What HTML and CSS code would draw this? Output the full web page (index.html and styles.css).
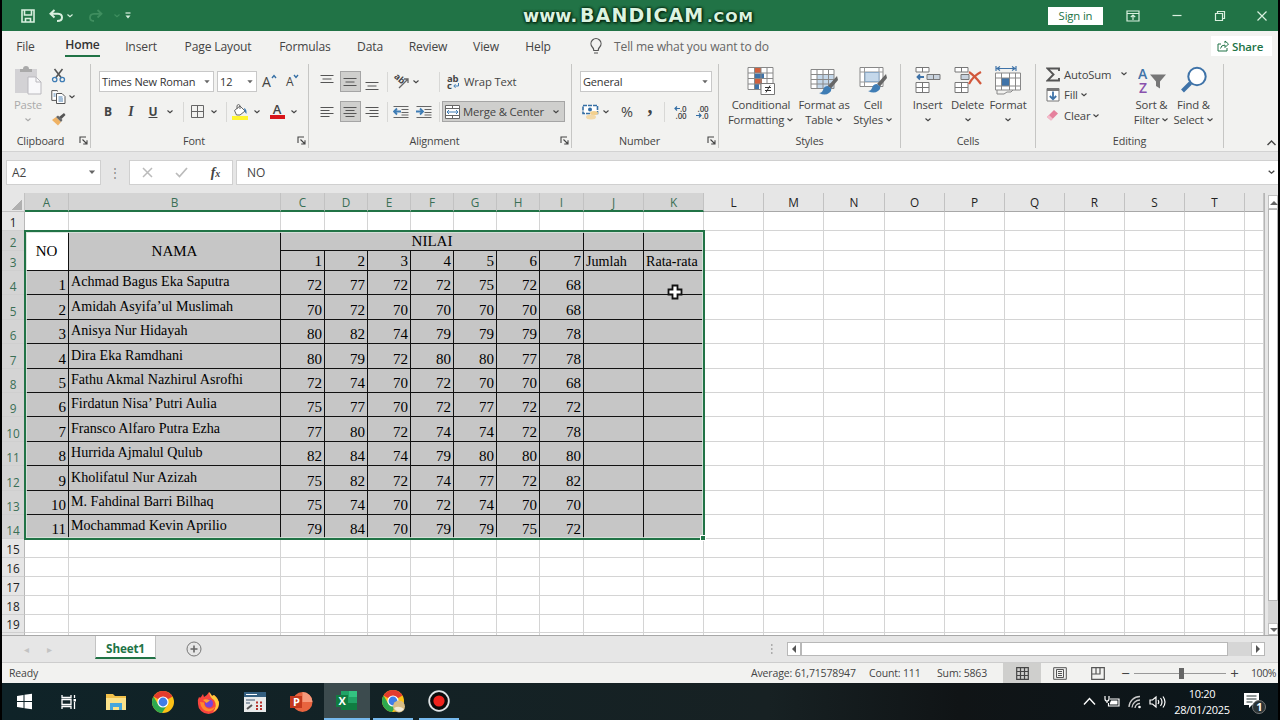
FILE: index.html
```html
<!DOCTYPE html>
<html lang="en">
  <head>
    <meta charset="UTF-8" />
    <meta name="viewport" content="width=device-width, initial-scale=1.0" />
    <title>Excel</title>
    <link rel="stylesheet" href="styles.css">
  </head>

  <body>
    <!-- shared shapes -->
    <svg class="defs">
      <symbol id="chev" viewBox="0 0 8 6"><path d="M1.500 1.500L4 3.600L6.500 1.500" fill="none" stroke="currentColor" stroke-width="1.200"/></symbol>
      <symbol id="tri" viewBox="0 0 8 6"><path d="M1.300 1.300h5.400L4 4.300z" fill="#666"/></symbol>
      <symbol id="launch" viewBox="0 0 9 9"><path d="M1 7V1h6M3.500 3.500L8 8M8 4.200V8H4.200" fill="none" stroke="#444" stroke-width="1.100"/></symbol>
      <symbol id="chrome" viewBox="0 0 24 24">
        <circle cx="12" cy="12" r="11" fill="#fbc116"/>
        <path d="M12 12L2.500 6.500A11 11 0 0 1 21.500 6.500z" fill="#e33b2e"/>
        <path d="M2.500 6.500A11 11 0 0 0 11 23L16.500 14.500L12 12L7.300 14.700z" fill="#2da94f"/>
        <circle cx="12" cy="12" r="5.600" fill="#fff"/><circle cx="12" cy="12" r="4.400" fill="#3f7de8"/>
      </symbol>
      <symbol id="brush" viewBox="0 0 20 20"><path d="M19 1L10 11l3 2.500L20 5z" fill="#666"/><path d="M10 11q-4 0-5 4q-1 3-4 3q6 3 10 0q3-2 2-4.500z" fill="#3f7db5"/></symbol>
    </svg>

    <div class="window">
      <div class="titlebar">
        <div class="quick">
          <svg width="14" height="14" viewBox="0 0 14 14"><path d="M1 1h12v12H1zM3.500 1v5h7V1M4.500 13V9.500h5v3.500" fill="none" stroke="#d9f0df" stroke-width="1.600"/></svg>
          <svg width="14" height="14" viewBox="0 0 14 14"><path d="M5.500 1L1.500 4.800L5.500 8.500M1.500 4.800H9q4 .2 4 3.700q0 3.500-5 3.500" fill="none" stroke="#d9f0df" stroke-width="2"/></svg>
          <svg class="light" width="8" height="6"><use href="#chev"/></svg>
          <svg width="14" height="14" viewBox="0 0 14 14"><path d="M8.500 1L12.500 4.800L8.500 8.500M12.500 4.800H5q-4 .2-4 3.700q0 3.500 4 3.500" fill="none" stroke="#3f8e5f" stroke-width="1.800"/></svg>
          <svg class="dim" width="8" height="6"><use href="#chev"/></svg>
          <svg width="8" height="8" viewBox="0 0 8 8"><path d="M1.500 1h5" stroke="#d9f0df" stroke-width="1.200"/><path d="M1.500 3.500h5L4 6.500z" fill="#d9f0df"/></svg>
        </div>
        <div class="brand"><span class="www">www.</span><span class="bandi">BANDICAM</span><span class="com">.COM</span></div>
        <div class="sign">Sign in</div>
        <div class="win-btns">
          <svg width="14" height="12" viewBox="0 0 14 12"><path d="M1 1h12v10H1zM1 3.500h12M7 10V5M4.800 7L7 5l2.200 2" fill="none" stroke="#d9f0df" stroke-width="1.200"/></svg>
          <svg width="12" height="12" viewBox="0 0 12 12"><path d="M1.500 5.500h9" stroke="#d9f0df" stroke-width="1.200"/></svg>
          <svg width="12" height="12" viewBox="0 0 12 12"><path d="M1.500 3.500h7v7h-7zM3.500 3.500v-2h7v7H8.500" fill="none" stroke="#d9f0df" stroke-width="1.200"/></svg>
          <svg width="12" height="12" viewBox="0 0 12 12"><path d="M1.500 1.500l9 9M10.500 1.500l-9 9" stroke="#d9f0df" stroke-width="1.200"/></svg>
        </div>
      </div>

      <div class="tabs">
        <div>File</div>
        <div class="active"><span>Home</span></div>
        <div>Insert</div>
        <div>Page Layout</div>
        <div>Formulas</div>
        <div>Data</div>
        <div>Review</div>
        <div>View</div>
        <div>Help</div>
        <svg class="bulb" width="14" height="18" viewBox="0 0 14 18"><path d="M4.800 12.500q0-2-1.500-3.500a5 5 0 1 1 7.400 0q-1.500 1.500-1.500 3.500zM5 15h4" fill="none" stroke="#555" stroke-width="1.200"/></svg>
        <div class="tell">Tell me what you want to do</div>
        <div class="share">
          <svg width="12" height="12" viewBox="0 0 12 12"><path d="M4 4H1v7h9V8M3.500 8.500Q4 5 8 5V7.500L11.500 4L8 1V3.200" fill="none" stroke="#217346" stroke-width="1"/></svg>
          Share
        </div>
      </div>

      <div class="ribbon">
        <div class="group clipboard">
          <div class="body">
            <div class="big paste">
              <svg width="28" height="30" viewBox="0 0 28 30"><path d="M1 3h22v24H1z" fill="#d3d2d5"/><path d="M6 6V3h3q0-3 3-3t3 3h3v3z" fill="#aaa"/><path d="M14 11h8l5 5v12H14z" fill="#f8f8fa" stroke="#b9b8bd"/><path d="M22 11v5h5" fill="none" stroke="#b9b8bd"/></svg>
              <span>Paste</span>
              <svg width="8" height="6"><use href="#chev"/></svg>
            </div>
            <div class="clip-col">
              <div><svg width="14" height="15" viewBox="0 0 14 15"><path d="M3 1l7 9M11 1L4 10" stroke="#555" stroke-width="1.600"/><circle cx="3.200" cy="11.500" r="2.200" fill="none" stroke="#3f7db5" stroke-width="1.300"/><circle cx="10.800" cy="11.500" r="2.200" fill="none" stroke="#3f7db5" stroke-width="1.300"/></svg></div>
              <div><svg width="15" height="14" viewBox="0 0 15 14"><path d="M7 1.500L6 .6H.8v9.800H5" fill="#fff" stroke="#555"/><path d="M5.500 3.500H11l3 3v7H5.500z" fill="#fff" stroke="#555"/><path d="M7.500 7h4M7.500 9h4.500M7.500 11h4.500M2.500 4h2M2.500 6h2" stroke="#4a7fb0"/></svg><svg width="8" height="6"><use href="#chev"/></svg></div>
              <div><svg width="15" height="14" viewBox="0 0 15 14"><path d="M1 8l4-3 5 5-3 3.500z" fill="#efb264"/><path d="M5 5l2-1.500L11.500 8 10 10z" fill="#666"/><path d="M8 5l5-4 1.500 2L10.500 7z" fill="#555"/></svg></div>
            </div>
          </div>
          <div class="caption"><span>Clipboard</span><svg width="9" height="9"><use href="#launch"/></svg></div>
        </div>

        <div class="group font">
          <div class="body rows">
            <div class="row font-top">
              <div class="combo">Times New Roman<svg width="8" height="6"><use href="#tri"/></svg></div>
              <div class="combo">12<svg width="8" height="6"><use href="#tri"/></svg></div>
              <div class="grow">A<svg width="6" height="5" viewBox="0 0 6 5"><path d="M1 4l2-2.500L5 4" fill="none" stroke="#356fa5" stroke-width="1.400"/></svg></div>
              <div class="grow small">A<svg width="6" height="5" viewBox="0 0 6 5"><path d="M1 1l2 2.500L5 1" fill="none" stroke="#356fa5" stroke-width="1.400"/></svg></div>
            </div>
            <div class="row font-bottom">
              <b>B</b><i>I</i><u>U</u>
              <svg width="8" height="6"><use href="#chev"/></svg>
              <hr>
              <svg width="13" height="13" viewBox="0 0 13 13"><path d="M.5.5h12v12H.5zM6.500.5v12M.5 6.500h12" fill="none" stroke="#666"/></svg>
              <svg width="8" height="6"><use href="#chev"/></svg>
              <hr>
              <svg width="16" height="16" viewBox="0 0 16 16"><path d="M0 12h16v4H0z" fill="#fff530"/><path d="M2.500 6.500L8 2l5 5-5 4H4.500z" fill="#fff" stroke="#666"/><path d="M5 5V1.500q1.500-2 3 0V5" fill="none" stroke="#666"/><path d="M12 4q3 1 2.500 6q-2.500-2-2.500-6" fill="#3f7db5"/></svg>
              <svg width="8" height="6"><use href="#chev"/></svg>
              <span class="color-a">A</span>
              <svg width="8" height="6"><use href="#chev"/></svg>
            </div>
          </div>
          <div class="caption"><span>Font</span><svg width="9" height="9"><use href="#launch"/></svg></div>
        </div>

        <div class="group align">
          <div class="body rows">
            <div class="row align-top">
              <svg width="14" height="18" viewBox="0 0 14 18"><path d="M.5 2.500h13M2.500 6h9M.5 9.500h13" stroke="#555"/></svg>
              <div class="on"><svg width="14" height="12" viewBox="0 0 14 12"><path d="M.5 2.500h13M2.500 6h9M.5 9.500h13" stroke="#555"/></svg></div>
              <svg width="14" height="18" viewBox="0 0 14 18"><path d="M.5 9.500h13M2.500 13h9M.5 16.500h13" stroke="#555"/></svg>
              <hr>
              <div class="orient"><span>ab</span><svg width="16" height="15" viewBox="0 0 16 15"><path d="M5 14L14 5M10 5h4v4" fill="none" stroke="#666" stroke-width="1.300"/></svg></div>
              <svg width="8" height="6"><use href="#chev"/></svg>
              <hr>
              <div class="wrap"><div class="wrap-icon"><span>ab</span><span>c<svg width="6" height="6" viewBox="0 0 6 6"><path d="M5.500 0v3H1M2.500 1.200L.8 3l1.700 1.800" fill="none" stroke="#3f7db5"/></svg></span></div>Wrap Text</div>
            </div>
            <div class="row align-bottom">
              <svg width="14" height="12" viewBox="0 0 14 12"><path d="M.5 1.500h13M.5 4.500h9M.5 7.500h13M.5 10.500h9" stroke="#555"/></svg>
              <div class="on"><svg width="14" height="12" viewBox="0 0 14 12"><path d="M.5 1.500h13M2.500 4.500h9M.5 7.500h13M2.500 10.500h9" stroke="#555"/></svg></div>
              <svg width="14" height="12" viewBox="0 0 14 12"><path d="M.5 1.500h13M4.500 4.500h9M.5 7.500h13M4.500 10.500h9" stroke="#555"/></svg>
              <hr>
              <svg width="16" height="14" viewBox="0 0 16 14"><path d="M.5 1.500h15M8.500 4.500h7M8.500 7.500h7M.5 12.500h15M8.500 10h7" stroke="#666"/><path d="M8 6.500H2M4 3.500L1 6.500l3 3" fill="none" stroke="#3f7db5" stroke-width="1.800"/></svg>
              <svg width="16" height="14" viewBox="0 0 16 14"><path d="M.5 1.500h15M8.500 4.500h7M8.500 7.500h7M.5 12.500h15M8.500 10h7" stroke="#666"/><path d="M0 6.500H6M4 3.500l3 3-3 3" fill="none" stroke="#3f7db5" stroke-width="1.800"/></svg>
              <hr>
              <div class="merge"><svg width="15" height="14" viewBox="0 0 15 14"><path d="M.5.5h14v13H.5zM.5 3.500h14M.5 10.500h14M7.500.5v3M7.500 10.500v3" fill="#fff" stroke="#666"/><path d="M2 7h11M4 5L2 7l2 2M11 5l2 2-2 2" fill="none" stroke="#3f7db5"/></svg><span>Merge &amp; Center</span><svg width="8" height="6"><use href="#chev"/></svg></div>
            </div>
          </div>
          <div class="caption"><span>Alignment</span><svg width="9" height="9"><use href="#launch"/></svg></div>
        </div>

        <div class="group number">
          <div class="body rows">
            <div class="row"><div class="combo">General<svg width="8" height="6"><use href="#tri"/></svg></div></div>
            <div class="row number-bottom">
              <svg width="17" height="16" viewBox="0 0 17 16"><path d="M1 1.500h14.500v8H1z" fill="#fff" stroke="#356fa5" stroke-width="1.600" stroke-dasharray="4 1"/><circle cx="8" cy="5.500" r="2" fill="#356fa5"/><ellipse cx="12" cy="9" rx="4" ry="2" fill="#f3d08e"/><ellipse cx="9" cy="13" rx="5" ry="2.500" fill="#f3d9a8"/></svg>
              <svg width="8" height="6"><use href="#chev"/></svg>
              <span class="pct">%</span>
              <span class="comma">,</span>
              <hr>
              <div class="dec"><span><svg width="6" height="5" viewBox="0 0 6 5"><path d="M6 2.500H1M3 .5L1 2.500l2 2" fill="none" stroke="#356fa5" stroke-width="1.200"/></svg>.0</span><span>.00</span></div>
              <div class="dec"><span>.00</span><span><svg width="6" height="5" viewBox="0 0 6 5"><path d="M0 2.500h5M3 .5l2 2-2 2" fill="none" stroke="#356fa5" stroke-width="1.200"/></svg>.0</span></div>
            </div>
          </div>
          <div class="caption"><span>Number</span><svg width="9" height="9"><use href="#launch"/></svg></div>
        </div>

        <div class="group styles">
          <div class="body">
            <div class="big">
              <svg width="28" height="30" viewBox="0 0 28 30"><path d="M1 1.500h25v22H1z" fill="#fff"/><path d="M8 1.500h6v5.500H8zM8 13h7v5H8z" fill="#d0603e"/><path d="M8 7.500h9v5.500H8zM8 18h4v5.500H8z" fill="#3f73a8"/><path d="M1 1.500h25v22H1zM1 7h25M1 12.500h25M1 18h25M7.500 1.500v22M14 1.500v22M20 1.500v22" fill="none" stroke="#888"/><path d="M14 17.500h13.500v11H14z" fill="#fff" stroke="#777"/><path d="M18 21.500h6M18 24.500h6M23 19.500l-4 7" stroke="#333"/></svg>
              <span>Conditional<br>Formatting <svg width="8" height="6"><use href="#chev"/></svg></span>
            </div>
            <div class="big">
              <svg width="28" height="30" viewBox="0 0 28 30"><path d="M1 3.500h23v19H1z" fill="#fff"/><path d="M7 9h17v13.500H7z" fill="#c5d8ea"/><path d="M1 3.500h23v19H1zM1 8.500h23M1 13.500h23M1 18h23M7 3.500v19M13 3.500v19M18.500 3.500v19" fill="none" stroke="#888"/><use href="#brush" x="8" y="9" width="20" height="20"/></svg>
              <span>Format as<br>Table <svg width="8" height="6"><use href="#chev"/></svg></span>
            </div>
            <div class="big">
              <svg width="28" height="30" viewBox="0 0 28 30"><path d="M1 1.500h23v19H1z" fill="#fff" stroke="#888"/><path d="M1 6h23M1 16h23M5.500 1.500v19M20 1.500v19" stroke="#999"/><path d="M6 6.500h14v9H6z" fill="#c5d8ea" stroke="#8ba9c7"/><use href="#brush" x="8" y="7" width="20" height="20"/></svg>
              <span>Cell<br>Styles <svg width="8" height="6"><use href="#chev"/></svg></span>
            </div>
          </div>
          <div class="caption"><span>Styles</span></div>
        </div>

        <div class="group cells">
          <div class="body">
            <div class="big">
              <svg width="28" height="30" viewBox="0 0 28 30"><path d="M2 1.500h13v4.500H2zM8.500 1.500v4.500M2 16.500h13v10H2zM8.500 16.500v10M2 21.500h13" fill="#fff" stroke="#777"/><path d="M13 8.500h13v5H13zM19.500 8.500v5" fill="#c8d2dd" stroke="#777"/><path d="M10 11H3.500M6 8.500L3.500 11L6 13.500" fill="none" stroke="#3f73a8" stroke-width="1.800"/></svg>
              <span>Insert</span><svg width="8" height="6"><use href="#chev"/></svg>
            </div>
            <div class="big">
              <svg width="28" height="30" viewBox="0 0 28 30"><path d="M1 1.500h13v4.500H1zM7.500 1.500v4.500M1 16.500h13v10H1zM7.500 16.500v10M1 21.500h13" fill="#fff" stroke="#777"/><path d="M7 8.500h8v5H7z" fill="#c8d2dd" stroke="#777"/><path d="M15 6q6 4 12 12M27 6q-8 4-12 12" fill="none" stroke="#d2583c" stroke-width="2.200"/></svg>
              <span>Delete</span><svg width="8" height="6"><use href="#chev"/></svg>
            </div>
            <div class="big">
              <svg width="28" height="30" viewBox="0 0 28 30"><path d="M1.500 7h25v17h-25z" fill="#fff"/><path d="M8 12h7v8H8z" fill="#3f73a8"/><path d="M1.500 7h25v17h-25zM1.500 12h25M1.500 20h25M7.500 7v17M15.500 7v17M21.500 7v17M3 24v4h7l3-2h4l2-2" fill="none" stroke="#888"/><path d="M2 0v5M22 0v5M3 2.500h18M6 .5l-3 2 3 2M18 .5l3 2-3 2" fill="none" stroke="#3f73a8" stroke-width="1.200"/></svg>
              <span>Format</span><svg width="8" height="6"><use href="#chev"/></svg>
            </div>
          </div>
          <div class="caption"><span>Cells</span></div>
        </div>

        <div class="group editing">
          <div class="body">
            <div class="edit-col">
              <div><svg width="14" height="15" viewBox="0 0 14 15"><path d="M13 4V1.500H1.500l6 6-6 6H13V11" fill="none" stroke="#555" stroke-width="1.900"/></svg><span class="auto">AutoSum</span><svg width="8" height="6"><use href="#chev"/></svg></div>
              <div><svg width="14" height="15" viewBox="0 0 14 15"><path d="M1 1.500h12v12.500H1z" fill="#fff" stroke="#777"/><path d="M1 1h12v3H1z" fill="#777"/><path d="M7 4.500v8M3.800 9L7 12.200L10.200 9" fill="none" stroke="#3f73a8" stroke-width="1.800"/></svg><span>Fill</span><svg width="8" height="6"><use href="#chev"/></svg></div>
              <div><svg width="14" height="15" viewBox="0 0 14 15"><path d="M1 9l7-7 4 3.500-7 7z" fill="#e5809c"/><path d="M1 9l2-2 4 3.700-2 1.800z" fill="#f4bccb"/></svg><span>Clear</span><svg width="8" height="6"><use href="#chev"/></svg></div>
            </div>
            <div class="big">
              <svg width="28" height="30" viewBox="0 0 28 30"><text x="0" y="13" class="sort-a">A</text><text x="1" y="27" class="sort-z">Z</text><path d="M12 8.500h16l-6 7v7l-4-2.500v-4.500z" fill="#777"/></svg>
              <span>Sort &amp;<br>Filter <svg width="8" height="6"><use href="#chev"/></svg></span>
            </div>
            <div class="big">
              <svg width="28" height="30" viewBox="0 0 28 30"><path d="M10.500 17L2.500 25" stroke="#3f73a8" stroke-width="4"/><circle cx="17" cy="10.500" r="8.700" fill="#fff" stroke="#3f73a8" stroke-width="2"/></svg>
              <span>Find &amp;<br>Select <svg width="8" height="6"><use href="#chev"/></svg></span>
            </div>
          </div>
          <div class="caption"><span>Editing</span></div>
        </div>
        <svg class="collapse" width="11" height="8" viewBox="0 0 11 8"><path d="M1.500 6l4-4 4 4" fill="none" stroke="#444" stroke-width="1.400"/></svg>
      </div>

      <div class="formula">
        <div class="name-box">A2<svg width="10" height="7" viewBox="0 0 8 6"><use href="#tri"/></svg></div>
        <div class="dots">⋮</div>
        <div class="fx">
          <svg width="11" height="11" viewBox="0 0 11 11"><path d="M1 1l9 9M10 1l-9 9" stroke="#bbb" stroke-width="1.500"/></svg>
          <svg width="13" height="11" viewBox="0 0 13 11"><path d="M1 6l3.500 3.500L12 1" fill="none" stroke="#bbb" stroke-width="1.700"/></svg>
          <i>f<small>x</small></i>
        </div>
        <div class="content">NO<svg width="9" height="7" viewBox="0 0 8 6"><use href="#chev"/></svg></div>
      </div>

      <div class="work">
        <div class="sheet">
          <table>
            <colgroup>
              <col class="c-head"><col class="c-no"><col class="c-name">
              <col class="c44"><col class="c43" span="5"><col class="c44">
              <col class="c60" span="4"><col class="c61"><col class="c60" span="6"><col class="c-last">
            </colgroup>
            <tbody id="grid"></tbody>
          </table>
          <div class="selection"></div>
          <svg class="cursor" width="16" height="16" viewBox="0 0 16 16"><path d="M5.500 1.500h5v4h4v5h-4v4h-5v-4h-4v-5h4z" fill="#fff" stroke="#111" stroke-width="1.800"/></svg>
        </div>
        <div class="vscroll">
          <div class="btn"><svg width="8" height="6" viewBox="0 0 8 6"><path d="M0 5h8L4 1z" fill="#666"/></svg></div>
          <div class="thumb"></div>
          <div class="btn down"><svg width="8" height="6" viewBox="0 0 8 6"><path d="M0 1h8L4 5z" fill="#666"/></svg></div>
        </div>
      </div>

      <div class="sheetbar">
        <div class="nav"><span>◂</span><span>▸</span></div>
        <div class="sheet-tab">Sheet1</div>
        <svg class="add" width="16" height="16" viewBox="0 0 16 16"><circle cx="8" cy="8" r="7" fill="none" stroke="#777"/><path d="M8 4.500v7M4.500 8h7" stroke="#666" stroke-width="1.600"/></svg>
        <svg class="hdots" width="4" height="12" viewBox="0 0 4 12"><path d="M1 2h1.500M1 6h1.500M1 10h1.500" stroke="#999" stroke-width="1.500"/></svg>
        <div class="hscroll">
          <div class="btn"><svg width="6" height="8" viewBox="0 0 6 8"><path d="M5 0v8L1 4z" fill="#555"/></svg></div>
          <div class="thumb"></div>
          <div class="btn"><svg width="6" height="8" viewBox="0 0 6 8"><path d="M1 0v8l4-4z" fill="#555"/></svg></div>
        </div>
      </div>

      <div class="status">
        <span class="ready">Ready</span>
        <span class="avg">Average: 61,71578947</span>
        <span class="count">Count: 111</span>
        <span class="sum">Sum: 5863</span>
        <div class="view on"><svg width="13" height="13" viewBox="0 0 13 13"><path d="M.7.7h11.600v11.600H.7zM4.500.7v12M8.500.7v12M.7 4.500h12M.7 8.500h12" fill="none" stroke="#444" stroke-width="1.200"/></svg></div>
        <div class="view"><svg width="14" height="13" viewBox="0 0 14 13"><path d="M.7.7h12.600v11.600H.7zM3.500 2.500h7v8h-7zM5 4.500h4M5 6.500h4M5 8.500h4" fill="none" stroke="#555"/></svg></div>
        <div class="view"><svg width="14" height="13" viewBox="0 0 14 13"><path d="M.7.7h12.600v11.600H.7zM5 .7V7M9 .7V7H.7" fill="none" stroke="#555" stroke-width="1.200"/></svg></div>
        <div class="zoom"><b>−</b><div class="track"><div class="knob"></div></div><b>+</b></div>
        <span class="pc">100%</span>
      </div>

      <div class="taskbar">
        <div><svg width="17" height="17" viewBox="0 0 17 17"><path d="M1 3l6.500-1v6H1zM8.500 1.800L16 .8V8H8.500zM1 9h6.500v6L1 14zM8.500 9H16v7.200l-7.500-1z" fill="#fff"/></svg></div>
        <div><svg width="16" height="16" viewBox="0 0 16 16"><path d="M1 1v2.500h9V1M1 15v-2.500h9V15M1 5.500h9v5H1zM13.500 1v3M13.500 8v7" fill="none" stroke="#fff" stroke-width="1.300"/><path d="M12.500 5h2.500v2.500h-2.500z" fill="#fff"/></svg></div>
        <div><svg width="22" height="18" viewBox="0 0 22 18"><path d="M1 1h7l2 2h11v14H1z" fill="#f2c14a"/><path d="M1 5h20v12H1z" fill="#fbe28a"/><path d="M5 10h12v7h-3v-3H8v3H5z" fill="#45a6dd"/></svg></div>
        <div><svg width="24" height="24"><use href="#chrome"/></svg></div>
        <div><svg width="24" height="24" viewBox="0 0 24 24"><path d="M2 7q1 1 2 0l2-3 1 3q3-1 5-5q2 2 3 4l2-1q5 4 5 9a10 9.500 0 0 1-21 0q-1-4 1-7z" fill="#f7453e"/><path d="M12 2q2 2 3 4l2-1q5 4 5 9q-1 6-6 8q5-6 1-12q-4-2-5-8z" fill="#ffc93a"/><path d="M3 12q1 9 9 9.500q5-1 6-5q-3 3-7 2q-4-2-4-6z" fill="#ff8a2d"/><circle cx="12" cy="13.500" r="4" fill="#7a45d8"/><path d="M6 10q3-1.500 7 .5l-3.500 2.500z" fill="#ffa02d"/></svg></div>
        <div><svg width="22" height="20" viewBox="0 0 22 20"><path d="M0 0h22v20H0z" fill="#e8eaea"/><path d="M0 0h22v5H0z" fill="#345f80"/><path d="M2 2.500h11" stroke="#fff"/><path d="M2 8h9M2 11h4" stroke="#789" stroke-width="1.500"/><path d="M12 10.500h2M16 10.500h2M12 14h2M16 14h2M12 17h2M16 17h2" stroke="#b8322c" stroke-width="2"/><path d="M3 17l5-4" stroke="#555" stroke-width="2"/></svg></div>
        <div><svg width="24" height="22" viewBox="0 0 24 22"><circle cx="13.500" cy="11" r="10" fill="#e8643f"/><path d="M13.500 1a10 10 0 0 1 10 10h-10z" fill="#f79a7c"/><path d="M1 5h12v12H1z" fill="#c4391d"/><text x="4" y="15" class="app">P</text></svg></div>
        <div class="run active"><svg width="24" height="22" viewBox="0 0 24 22"><path d="M6 1h16v19H6z" fill="#21a366"/><path d="M14 1h8v6h-8z" fill="#33c481"/><path d="M6 13h16v7H6z" fill="#107c41"/><path d="M1 5h12v12H1z" fill="#107c41"/><text x="3.500" y="15" class="app">X</text></svg></div>
        <div class="run"><svg width="25" height="24" viewBox="0 0 25 24"><use href="#chrome" width="24" height="24"/><circle cx="18" cy="17.500" r="6" fill="#d8bd86"/><path d="M13 19q5-3 10 1q-5 6-10-1" fill="#f2ead5"/></svg></div>
        <div class="run"><svg width="22" height="22" viewBox="0 0 22 22"><circle cx="11" cy="11" r="9.800" fill="#0b0b0b" stroke="#dfe3e5" stroke-width="1.800"/><circle cx="11" cy="11" r="5.600" fill="#f0221c"/></svg></div>
        <div class="tray">
          <svg width="13" height="9" viewBox="0 0 13 9"><path d="M1 7.500l5.500-6 5.500 6" fill="none" stroke="#fff" stroke-width="1.400"/></svg>
          <svg width="16" height="14" viewBox="0 0 16 14"><path d="M6 4h9v7H4.500V8" fill="none" stroke="#fff" stroke-width="1.200"/><path d="M7 5.500h6.500v4H6V8z" fill="#fff"/><path d="M1 1v3q0 2 2 2t2-2V1M3 6v2" fill="none" stroke="#fff" stroke-width="1.200"/></svg>
          <svg width="14" height="14" viewBox="0 0 14 14"><path d="M1 12A11 11 0 0 1 12 1.500M4 12.500A8 8 0 0 1 12 5M7 13a5 5 0 0 1 5-4.500" fill="none" stroke="#ccc" stroke-width="1.300"/><circle cx="11.500" cy="12" r="1.300" fill="#fff"/></svg>
          <svg width="17" height="14" viewBox="0 0 17 14"><path d="M1 5h2.500L7 2v10L3.500 9H1zM9 5q1.500 2 0 4M11.500 3q3 4 0 8M14 1.500q4 5.500 0 11" fill="none" stroke="#fff" stroke-width="1.200"/></svg>
          <div class="clock">10:20<br>28/01/2025</div>
          <svg width="24" height="24" viewBox="0 0 24 24"><path d="M1 3h15v12H9l-3 3v-3H1z" fill="#fff"/><path d="M3.500 6h10M3.500 9h10M3.500 12h6" stroke="#233" stroke-width="1.200"/><circle cx="16" cy="17" r="6.500" fill="#2b3436" stroke="#777"/><text x="13.300" y="21" class="badge">1</text></svg>
        </div>
      </div>
    </div>

    <script>
      const letters = "ABCDEFGHIJKLMNOPQRST".split("");
      const students = [
        ["Achmad Bagus Eka Saputra", 72, 77, 72, 72, 75, 72, 68],
        ["Amidah Asyifa’ul Muslimah", 70, 72, 70, 70, 70, 70, 68],
        ["Anisya Nur Hidayah", 80, 82, 74, 79, 79, 79, 78],
        ["Dira Eka Ramdhani", 80, 79, 72, 80, 80, 77, 78],
        ["Fathu Akmal Nazhirul Asrofhi", 72, 74, 70, 72, 70, 70, 68],
        ["Firdatun Nisa’ Putri Aulia", 75, 77, 70, 72, 77, 72, 72],
        ["Fransco Alfaro Putra Ezha", 77, 80, 72, 74, 74, 72, 78],
        ["Hurrida Ajmalul Qulub", 82, 84, 74, 79, 80, 80, 80],
        ["Kholifatul Nur Azizah", 75, 82, 72, 74, 77, 72, 82],
        ["M. Fahdinal Barri Bilhaq", 75, 74, 70, 72, 74, 70, 70],
        ["Mochammad Kevin Aprilio", 79, 84, 70, 79, 79, 75, 72],
      ];
      const heights = [19, 20, 20, 24, 25, 24, 25, 24, 24, 25, 24, 25, 24, 24, 19, 19, 19, 19, 18, 3];
      const empty = (n) => "<td></td>".repeat(n);

      let html = '<tr class="letters"><th class="corner"></th>';
      letters.forEach((l, i) => {
        html += `<th class="${i < 11 ? "sel" : ""}">${l}</th>`;
      });
      html += "<th></th></tr>";

      heights.forEach((h, i) => {
        const n = i + 1;
        let cells = "";
        if (n == 2) {
          cells = '<td class="t mid white" rowspan="2">NO</td><td class="t mid" rowspan="2">NAMA</td><td class="t mid" colspan="7">NILAI</td><td class="t"></td><td class="t"></td>' + empty(10);
        } else if (n == 3) {
          for (let j = 1; j < 8; j++) cells += `<td class="t num">${j}</td>`;
          cells += '<td class="t word">Jumlah</td><td class="t word">Rata-rata</td>' + empty(10);
        } else if (n > 3 && n < 15) {
          const s = students[n - 4];
          cells = `<td class="t num">${n - 3}</td><td class="t name">${s[0]}</td>`;
          for (let j = 1; j < 8; j++) cells += `<td class="t num">${s[j]}</td>`;
          cells += '<td class="t"></td><td class="t"></td>' + empty(10);
        } else {
          cells = empty(21);
        }
        html += `<tr style="height:${h}px"><th class="${n > 1 && n < 15 ? "sel" : ""}">${n < 20 ? n : ""}</th>${cells}</tr>`;
      });
      document.getElementById("grid").innerHTML = html;
    </script>
  </body>
</html>
```

FILE: styles.css
```css
* {
  box-sizing: border-box;
}

body {
  margin: 0;
  background-color: #000;
  font: 11.3px/15px "Open Sans", "Noto Sans", sans-serif;
  letter-spacing: -0.15px;
  color: #444;
}

svg {
  display: block;
  flex: none;
}

.defs {
  display: none;
}

.window {
  width: 1276px;
  height: 720px;
  margin: 0 2px;
  overflow: hidden;
  background-color: #e6e6e6;
}

/* title */
.titlebar {
  display: flex;
  align-items: center;
  height: 31px;
  background-color: #217346;
}

.titlebar > div {
  flex: none;
}

.quick {
  display: grid;
  grid-template-columns: 52px 4px 24px 28px 14px 8px;
  justify-items: center;
  align-items: center;
  width: 521px;
}

.quick svg:nth-child(2) {
  margin-left: -1px;
}

.light {
  color: #d9f0df;
}

.dim {
  color: #3f8e5f;
}

.brand {
  display: flex;
  align-items: baseline;
  width: 525px;
  font: bold 18px/30px "DejaVu Sans", sans-serif;
  letter-spacing: 0;
  color: #dcf3e0;
  text-shadow: 0 0 3px #06250f, 0 0 3px #06250f, 1px 1px 3px #06250f;
}

.www {
  width: 57px;
  font-size: 17.5px;
}

.bandi {
  width: 127px;
  font-size: 19px;
  letter-spacing: 1.1px;
}

.com {
  font-size: 14.5px;
  letter-spacing: 1px;
}

.sign {
  width: 55px;
  height: 18px;
  line-height: 18px;
  text-align: center;
  background-color: #fff;
  color: #217346;
}

.win-btns {
  display: grid;
  grid-template-columns: 44px 43px 43px 37px;
  justify-items: center;
  align-items: center;
  margin-left: 8px;
}

.win-btns svg:last-child {
  margin-left: 5px;
}

/* tabs */
.tabs {
  display: grid;
  grid-template-columns: 47px 67px 50px 104px 70px 60px 56px 60px 44px 52px 599px 62px;
  justify-items: center;
  align-items: center;
  height: 31px;
  padding-bottom: 1px;
  background-color: #f2f2f0;
  font-size: 12.1px;
}

.tabs .active {
  font-weight: 600;
  color: #333;
}

.active span {
  display: block;
  height: 20px;
  margin-top: 2px;
  line-height: 16px;
  border-bottom: 2px solid #217346;
}

.bulb {
  margin: 2px 0 0 19px;
}

.tell {
  justify-self: start;
  padding-left: 2px;
  color: #666;
}

.share {
  display: flex;
  align-items: center;
  gap: 3px;
  justify-self: start;
  height: 20px;
  width: 61px;
  padding-left: 6px;
  background-color: #fff;
  color: #217346;
  font-size: 11.5px;
  font-weight: 600;
}

/* ribbon */
.ribbon {
  display: flex;
  height: 89px;
  background-color: #f2f2f0;
}

.group {
  display: flex;
  flex-direction: column;
  height: 84px;
  margin-top: 2px;
  border-right: 1px solid #c6c6c4;
}

.clipboard {
  width: 89px;
}

.font {
  width: 218px;
}

.align {
  width: 263px;
}

.number {
  width: 147px;
}

.styles {
  width: 182px;
}

.cells {
  width: 135px;
}

.editing {
  width: 188px;
}

.body {
  display: flex;
  height: 71px;
}

.rows {
  flex-direction: column;
  gap: 9px;
  padding: 7px 0 0 6px;
}

.row {
  display: grid;
  align-items: center;
  justify-items: center;
  height: 21px;
}

.row hr {
  width: 1px;
  height: 20px;
  margin: 0;
  border: 0;
  background-color: #d8d8d6;
}

.caption {
  display: flex;
  align-items: center;
  height: 16px;
  padding-right: 2px;
  font-size: 10.8px;
}

.caption span {
  flex: 1;
  text-align: center;
}

.styles .caption,
.cells .caption,
.editing .caption {
  padding-right: 0;
}

.big {
  display: flex;
  flex-direction: column;
  align-items: center;
  padding-top: 2px;
  line-height: 15px;
  text-align: center;
}

.big span {
  margin-top: 1px;
  white-space: nowrap;
}

.big span svg {
  display: inline-block;
  vertical-align: 1px;
  margin-left: -1px;
}

.big > svg + span + svg {
  margin-top: 5px;
}

.paste {
  width: 48px;
  padding-left: 4px;
  color: #aaa;
}

.clip-col > div {
  display: flex;
  align-items: center;
  gap: 6px;
  height: 22px;
}

.clip-col svg:first-child {
  width: 15px;
}

.clip-col {
  padding-left: 1px;
}

.clip-col svg + svg {
  margin-left: -4px;
}

.font-top {
  grid-template-columns: 118px 41px 22px 22px;
  padding-left: 2px;
  justify-items: start;
}

.combo {
  display: flex;
  align-items: center;
  justify-content: space-between;
  width: 115px;
  height: 21px;
  padding: 0 2px;
  border: 1px solid #c8c8c8;
  background-color: #fff;
  color: #333;
  font-size: 11px;
}

.combo + .combo {
  width: 40px;
}

.number .combo {
  width: 132px;
}

.grow {
  display: flex;
  align-items: flex-start;
  padding-left: 4px;
  font-size: 14px;
}

.grow.small {
  padding-left: 6px;
  font-size: 12px;
}

.font-bottom {
  grid-template-columns: 22px 24px 20px 14px 12px 16px 18px 6px 22px 12px 28px 6px;
}

.font-bottom b,
.font-bottom i,
.font-bottom u {
  font-size: 12px;
  font-weight: bold;
}

.font-bottom i {
  font-family: "Liberation Serif", serif;
  font-size: 14px;
}

.color-a {
  width: 15px;
  height: 15px;
  border-bottom: 4px solid #d8151a;
  text-align: center;
  font-size: 13px;
  font-weight: 600;
  line-height: 11px;
}

.align-top {
  grid-template-columns: 24px 22px 22px 8px 22px 6px 40px 120px;
  justify-content: start;
}

.align-bottom {
  grid-template-columns: 24px 22px 22px 8px 20px 26px 4px 124px;
}

.align-top .wrap {
  justify-self: start;
}

.on {
  display: flex;
  align-items: center;
  justify-content: center;
  width: 21px;
  height: 21px;
  border: 1px solid #a5a5a5;
  background-color: #cfcfcd;
}

.orient {
  display: grid;
  width: 16px;
  height: 16px;
}

.orient > * {
  grid-area: 1 / 1;
}

.orient span {
  width: 12px;
  height: 10px;
  font-size: 9px;
  font-weight: bold;
  line-height: 10px;
  transform: rotate(42deg);
}

.wrap {
  display: flex;
  align-items: center;
  gap: 5px;
  margin-left: -12px;
}

.wrap-icon {
  width: 12px;
  font-size: 9.5px;
  font-weight: bold;
  line-height: 7px;
}

.wrap-icon span {
  display: flex;
  align-items: flex-end;
  gap: 1px;
}

.merge {
  display: flex;
  align-items: center;
  gap: 3px;
  width: 123px;
  height: 21px;
  margin-left: 1px;
  padding: 0 4px 0 2px;
  border: 1px solid #a5a5a5;
  background-color: #cfcfcd;
}

.merge span {
  flex: 1;
}

.dec {
  width: 15px;
  color: #444;
  font-size: 8px;
  font-weight: 600;
  line-height: 7px;
}

.dec span {
  display: flex;
  align-items: center;
  justify-content: flex-end;
}

.number .rows .row:first-child {
  justify-items: start;
  padding-left: 2px;
}

.number-bottom {
  grid-template-columns: 24px 8px 34px 12px 16px 14px 30px;
}

.pct {
  font-size: 14.5px;
}

.comma {
  font: bold 20px/8px "Liberation Serif", serif;
  margin-top: -12px;
}

.styles .body {
  display: grid;
  grid-template-columns: 84px 42px 56px;
  justify-items: center;
}

.cells .body {
  display: grid;
  grid-template-columns: 53px 27px 54px;
  justify-items: center;
}

.editing .body {
  display: grid;
  grid-template-columns: 94px 43px 41px;
}

.edit-col {
  padding-left: 10px;
}

.edit-col > div {
  display: flex;
  align-items: center;
  gap: 4px;
  height: 21.3px;
}

.edit-col > div:first-child {
  height: 20px;
}

.edit-col .auto {
  width: 52px;
}

.edit-col span + svg {
  margin-left: -2px;
}

.edit-col .auto + svg {
  margin-left: 0;
}

.sort-a {
  font: 600 14px "Open Sans", sans-serif;
  fill: #3f73a8;
}

.sort-z {
  font: 600 14px "Open Sans", sans-serif;
  fill: #8a52ad;
}

.collapse {
  margin: 77px 0 0 42px;
}

/* formula bar */
.formula {
  display: flex;
  align-items: center;
  height: 42px;
  padding: 0 0 0 4px;
  border-top: 1px solid #d2d2d2;
  font-size: 12px;
}

.name-box,
.fx,
.content {
  display: flex;
  align-items: center;
  justify-content: space-between;
  height: 25px;
  border: 1px solid #d0d0d0;
  background-color: #fff;
}

.name-box {
  width: 95px;
  padding: 0 3px 0 5px;
}

.dots {
  width: 28px;
  text-align: center;
  color: #888;
}

.fx {
  width: 104px;
  padding: 0 12px;
}

.fx i {
  font: italic bold 14px "Liberation Serif", serif;
}

.fx small {
  font-size: 10px;
}

.content {
  flex: 1;
  margin-left: 3px;
  padding: 0 2px 0 10px;
  border-right: 0;
}

/* sheet */
.work {
  display: flex;
  height: 443px;
  border-bottom: 1px solid #a8a8a8;
}

.sheet {
  position: relative;
  width: 1263px;
  height: 442px;
  overflow: hidden;
  border-right: 1px solid #b5b5b5;
}

table {
  width: 1262px;
  table-layout: fixed;
  border-spacing: 0;
  background-color: #fff;
  letter-spacing: 0;
}

.c-head { width: 23px; }
.c-no { width: 44px; }
.c-name { width: 212px; }
.c43 { width: 43px; }
.c44 { width: 44px; }
.c60 { width: 60px; }
.c61 { width: 61px; }
.c-last { width: 19px; }

th {
  height: inherit;
  padding: 0;
  border-right: 1px solid #b8b8b8;
  border-bottom: 1px solid #cfcfcf;
  background-color: #e6e6e6;
  color: #222;
  font-size: 11.8px;
  font-weight: normal;
  line-height: 16px;
  vertical-align: bottom;
}

.letters th {
  height: 19px;
  border-right-color: #c2c2c2;
  border-bottom: 1px solid #a8a8a8;
  line-height: 18px;
}

th.sel {
  background-color: #d4d4d4;
  color: #3a6f55;
}

.letters .sel {
  border-bottom: 2px solid #217346;
  line-height: 16px;
}

.letters .corner {
  border-color: #c2c2c2;
  background: linear-gradient(135deg, transparent 50%, #b0b0b0 50%) 9px 6px / 11px 11px no-repeat #e6e6e6;
}

td {
  padding: 0;
  border-right: 1px solid #d4d4d4;
  border-bottom: 1px solid #d4d4d4;
  font: 15px/16px "Liberation Serif", serif;
  color: #000;
  white-space: nowrap;
  vertical-align: bottom;
}

.t {
  border-color: #111;
  background-color: #c6c6c6;
}

.white {
  background-color: #fff;
}

.mid {
  text-align: center;
  vertical-align: middle;
}

.num {
  padding: 0 2px 1px 0;
  text-align: right;
}

.name {
  padding: 0 0 5px 2px;
  font-size: 14.1px;
}

.word {
  padding: 0 0 1px 2px;
  font-size: 14.1px;
}

.selection {
  position: absolute;
  left: 22px;
  top: 37px;
  width: 681px;
  height: 310px;
  border: 2px solid #217346;
  box-shadow: inset 0 0 0 1px rgba(215, 228, 220, 0.85);
}

.selection::after {
  content: "";
  position: absolute;
  right: -3px;
  bottom: -3px;
  width: 4px;
  height: 4px;
  border: 1px solid #fff;
  background-color: #217346;
  box-sizing: content-box;
}

.cursor {
  position: absolute;
  left: 665px;
  top: 91px;
}

.vscroll {
  display: flex;
  flex-direction: column;
  width: 10px;
  margin: 2px 0 0 3px;
  background-color: #d4d4d4;
}

.vscroll .btn {
  height: 14px;
  padding: 4px 1px;
  border: 1px solid #c0c0c0;
  background-color: #fff;
}

.vscroll .thumb {
  height: 392px;
  border: 1px solid #b5b5b5;
  background-color: #fff;
}

.vscroll .down {
  margin-top: auto;
  height: 12px;
  padding-top: 3px;
}

/* sheet tabs */
.sheetbar {
  display: flex;
  align-items: center;
  height: 27px;
  border-bottom: 1px solid #cdcdcd;
}

.nav {
  display: flex;
  gap: 18px;
  width: 93px;
  padding-left: 22px;
  color: #c3c3c3;
  font-size: 10px;
}

.sheet-tab {
  align-self: flex-start;
  width: 61px;
  height: 23px;
  border: solid #c3c3c3;
  border-width: 0 1px;
  border-bottom: 2px solid #217346;
  background-color: #fff;
  color: #217346;
  font-size: 11.7px;
  font-weight: bold;
  line-height: 25px;
  text-align: center;
}

.add {
  margin-left: 30px;
}

.hdots {
  margin-left: 568px;
}

.hscroll {
  display: flex;
  width: 478px;
  height: 14px;
  margin-left: 13px;
  background-color: #d6d6d6;
}

.hscroll .btn {
  width: 14px;
  padding: 2px 3px;
  border: 1px solid #b8b8b8;
  background-color: #fff;
}

.hscroll .thumb {
  width: 427px;
  margin-right: auto;
  border: 1px solid #b8b8b8;
  background-color: #fff;
}

/* status */
.status {
  display: flex;
  align-items: center;
  height: 20px;
  background-color: #f2f2f0;
  font-size: 10.5px;
}

.ready {
  width: 749px;
  padding-left: 7px;
}

.avg {
  width: 118px;
}

.count {
  width: 68px;
}

.sum {
  width: 66px;
}

.view {
  display: flex;
  align-items: center;
  justify-content: center;
  width: 38px;
  height: 20px;
}

.view.on {
  border: 0;
}

.zoom {
  display: flex;
  align-items: center;
  width: 122px;
  padding-left: 4px;
  gap: 4px;
}

.zoom b {
  width: 9px;
  font-size: 15px;
  font-weight: normal;
  text-align: center;
}

.track {
  width: 93px;
  height: 1px;
  background-color: #999;
}

.knob {
  width: 5px;
  height: 11px;
  margin: -5px 0 0 45px;
  background-color: #666;
}

.pc {
  margin-left: 12px;
  letter-spacing: -0.4px;
}

/* taskbar */
.taskbar {
  display: grid;
  grid-template-columns: 44px 46px 48px repeat(4, 46px) 46px 46px 46px 1fr;
  height: 37px;
  background: linear-gradient(90deg, #0f2328, #172123 60%, #101416 75%, #0b171c);
}

.taskbar > div {
  display: flex;
  align-items: center;
  justify-content: center;
}

.taskbar .run {
  margin: 0 3px;
  border-bottom: 2px solid #76b9ed;
}

.taskbar .active {
  margin: 0;
  background-color: #3c4b4e;
}

.taskbar .tray {
  display: grid;
  grid-template-columns: 24px 22px 24px 20px 70px 36px;
  justify-content: end;
  justify-items: center;
  padding-right: 5px;
  color: #fff;
}

.clock {
  font-size: 11px;
  line-height: 16px;
  letter-spacing: -0.3px;
  text-align: center;
}

.app {
  font: bold 11px "Open Sans", sans-serif;
  fill: #fff;
}

.badge {
  font: bold 11px "Open Sans", sans-serif;
  fill: #fff;
}
```
